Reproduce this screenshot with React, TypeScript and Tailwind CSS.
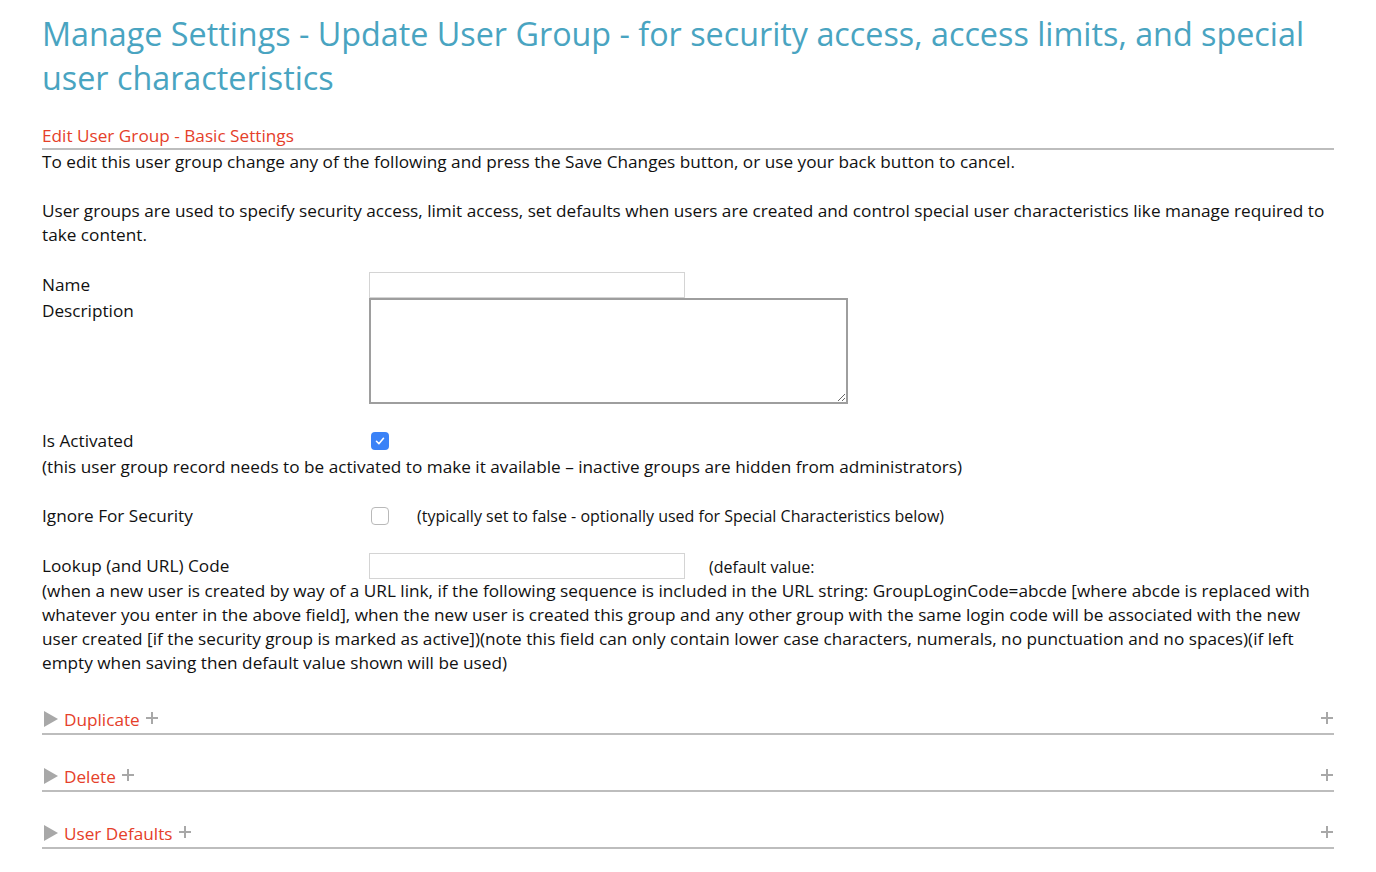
import { useState } from "react";

function Check({ checked, onChange }: { checked: boolean; onChange: () => void }) {
  return (
    <button
      type="button"
      onClick={onChange}
      className={
        checked
          ? "w-[18px] h-[18px] rounded-[4px] bg-[#3a82f7] flex items-center justify-center"
          : "w-[18px] h-[18px] rounded-[4px] border border-[#b9b9b9] bg-white"
      }
    >
      {checked && (
        <svg viewBox="0 0 12 12" className="w-[12px] h-[12px]">
          <path d="M2.5 6.3l2.4 2.4 4.6-5.4" fill="none" stroke="white" strokeWidth="1.6" strokeLinecap="round" strokeLinejoin="round" />
        </svg>
      )}
    </button>
  );
}

function Plus() {
  return (
    <svg viewBox="0 0 12 12" className="w-[12px] h-[12px]">
      <path d="M6 0V12M0 6H12" stroke="#a8a8a8" strokeWidth="2" />
    </svg>
  );
}

function Section({ title }: { title: string }) {
  return (
    <div className="flex items-center h-[28px] border-b-2 border-[#bdbdbd]">
      <svg viewBox="0 0 14 16" className="w-[14px] h-[16px] ml-[2px] mr-[6px] -mt-[2px]">
        <path d="M0 0L14 8L0 16Z" fill="#a8a8a8" />
      </svg>
      <span className="text-[#e5402a] text-[17.2px]">{title}</span>
      <span className="ml-[6px] -mt-[4px]"><Plus /></span>
      <span className="ml-auto -mt-[4px] mr-[1px]"><Plus /></span>
    </div>
  );
}

export default function App() {
  const [active, setActive] = useState(true);
  const [ignore, setIgnore] = useState(false);

  return (
    <div className="bg-white min-h-[872px] px-[42px] pt-[11px] text-[#111] text-[17.2px] leading-[24px]" style={{ fontFamily: '"Open Sans", sans-serif' }}>
      <h1 className="text-[#49a4c1] text-[32.3px] leading-[44px]">
        Manage Settings - Update User Group - for security access, access limits, and special user characteristics
      </h1>

      <div className="mt-[25px] border-b-2 border-[#bdbdbd] text-[#e5402a] text-[17.2px] leading-[24px]">
        Edit User Group - Basic Settings
      </div>
      <p>To edit this user group change any of the following and press the Save Changes button, or use your back button to cancel.</p>
      <p className="mt-[25px]">
        User groups are used to specify security access, limit access, set defaults when users are created and control special user characteristics like manage required to take content.
      </p>

      <div className="mt-[25px] flex items-center">
        <label className="w-[327px]">Name</label>
        <input className="w-[316px] h-[26px] border border-[#d4d4d4] outline-none" />
      </div>
      <div className="flex">
        <label className="w-[327px] pt-[1px]">Description</label>
        <textarea className="w-[479px] h-[106px] border-2 border-[#9e9e9e] outline-none" />
      </div>

      <div className="mt-[25px] flex items-center">
        <label className="w-[329px]">Is Activated</label>
        <Check checked={active} onChange={() => setActive(!active)} />
      </div>
      <p className="mt-[2px]">(this user group record needs to be activated to make it available – inactive groups are hidden from administrators)</p>

      <div className="mt-[25px] flex items-center">
        <label className="w-[329px]">Ignore For Security</label>
        <Check checked={ignore} onChange={() => setIgnore(!ignore)} />
        <span className="ml-[28px] text-[16px]">(typically set to false - optionally used for Special Characteristics below)</span>
      </div>

      <div className="mt-[25px] flex items-center">
        <label className="w-[327px]">Lookup (and URL) Code</label>
        <input className="w-[316px] h-[26px] border border-[#d4d4d4] outline-none" />
        <span className="ml-[24px] text-[16px] mt-[2px]">(default value:</span>
      </div>
      <p>
        (when a new user is created by way of a URL link, if the following sequence is included in the URL string: GroupLoginCode=abcde [where abcde is replaced with whatever you enter in the above field], when the new user is created this group and any other group with the same login code will be associated with the new user created [if the security group is marked as active])(note this field can only contain lower case characters, numerals, no punctuation and no spaces)(if left empty when saving then default value shown will be used)
      </p>

      <div className="mt-[32px] flex flex-col gap-[29px]">
        <Section title="Duplicate" />
        <Section title="Delete" />
        <Section title="User Defaults" />
      </div>
    </div>
  );
}
